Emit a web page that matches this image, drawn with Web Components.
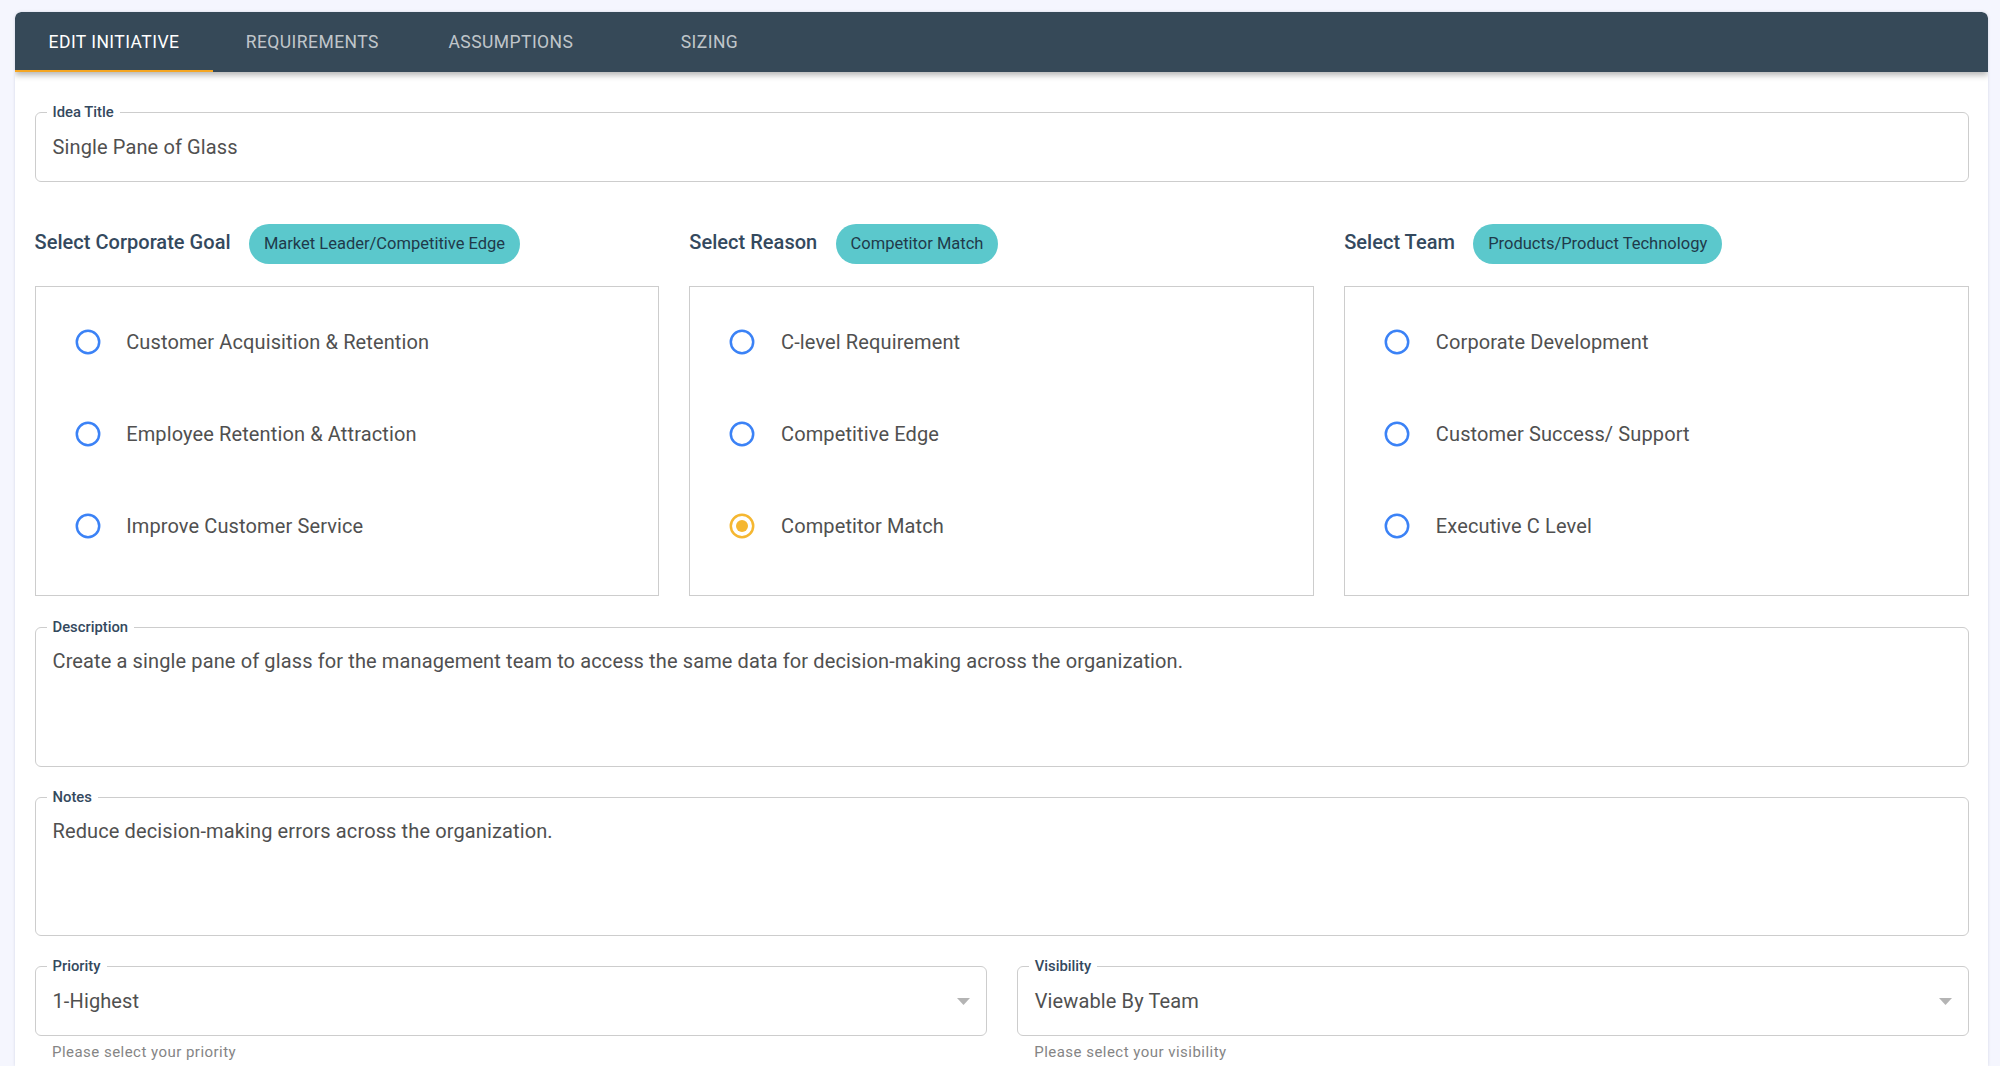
<!DOCTYPE html>
<html>
<head>
<meta charset="utf-8">
<title>Edit Initiative</title>
<style>
    html, body { margin: 0; height: 100%; overflow: hidden; background: #f5f6fe; }
    body { font-family: Roboto, "Liberation Sans", sans-serif; color: #505050; }
</style>
</head>
<body>

<initiative-page>
    <tab-bar slot="tabs" active="0" tabs="Edit Initiative,Requirements,Assumptions,Sizing"></tab-bar>

    <outlined-field label="Idea Title" height="78" style="margin-top: 32px; --field-top: 14px">Single Pane of Glass</outlined-field>

    <div slot="choices">
        <choice-group heading="Select Corporate Goal" chip="Market Leader/Competitive Edge"
            options="Customer Acquisition &amp; Retention|Employee Retention &amp; Attraction|Improve Customer Service"></choice-group>
        <choice-group heading="Select Reason" chip="Competitor Match" selected="2"
            options="C-level Requirement|Competitive Edge|Competitor Match"></choice-group>
        <choice-group heading="Select Team" chip="Products/Product Technology"
            options="Corporate Development|Customer Success/ Support|Executive C Level"></choice-group>
    </div>

    <outlined-field slot="after" label="Description" height="148">Create a single pane of glass for the management team to access the same data for decision-making across the organization.</outlined-field>
    <outlined-field slot="after" label="Notes" height="147" style="margin-top: 22px">Reduce decision-making errors across the organization.</outlined-field>

    <div slot="selects">
        <select-field label="Priority" value="1-Highest" help="Please select your priority"></select-field>
        <select-field label="Visibility" value="Viewable By Team" help="Please select your visibility"></select-field>
    </div>
</initiative-page>

<script>
const fontStack = 'Roboto, "Liberation Sans", sans-serif'

const pageTemplate = document.createElement("template");
pageTemplate.innerHTML = /*html*/`
<style>
    :host {
        display: block;
        height: 1054px;
        margin: 12px 12px 0 15px;
        background: #fff;
        border-radius: 6px 6px 0 0;
        box-shadow: 0 0 3px rgba(60, 70, 110, 0.18);
        font-family: ${fontStack};
        overflow: hidden;
    }
    #content {
        display: flex;
        flex-direction: column;
        padding: 0 19px 0 19.5px;
    }
    ::slotted([slot="choices"]) {
        display: grid;
        grid-template-columns: repeat(3, 1fr);
        column-gap: 30px;
        margin: 41px 0 23px;
    }
    ::slotted([slot="after"]) {
        display: block;
    }
    ::slotted([slot="selects"]) {
        display: grid;
        grid-template-columns: repeat(2, 1fr);
        column-gap: 30px;
        margin-top: 22px;
    }
</style>
<slot name="tabs"></slot>
<div id="content">
    <slot></slot>
    <slot name="choices"></slot>
    <slot name="after"></slot>
    <slot name="selects"></slot>
</div>
`;

class InitiativePage extends HTMLElement {
    constructor() {
        super();
        this.attachShadow({ mode: "open" });
        this.shadowRoot.appendChild(pageTemplate.content.cloneNode(true));
    }
}
customElements.define("initiative-page", InitiativePage);


const tabBarTemplate = document.createElement("template");
tabBarTemplate.innerHTML = /*html*/`
<style>
    :host {
        display: block;
        position: relative;
        background: #364958;
        border-radius: 6px 6px 0 0;
        box-shadow: 0 3px 6px rgba(0, 0, 0, 0.3);
    }
    #tabs {
        display: grid;
        grid-template-columns: 198px repeat(3, 198.6px);
        height: 60px;
    }
    .tab {
        display: flex;
        align-items: center;
        justify-content: center;
        box-sizing: border-box;
        padding-top: 1px;
        border-bottom: 2px solid transparent;
        color: rgba(255, 255, 255, 0.7);
        font-size: 17.5px;
        font-weight: 400;
        letter-spacing: 0.45px;
        text-transform: uppercase;
    }
    .tab.active {
        color: #fff;
        border-bottom-color: #f5a623;
    }
</style>
<div id="tabs"></div>
`;

class TabBar extends HTMLElement {
    constructor() {
        super();
        this.attachShadow({ mode: "open" });
        this.shadowRoot.appendChild(tabBarTemplate.content.cloneNode(true));
    }

    connectedCallback() {
        const active = parseInt(this.getAttribute("active"))
        const tabs = this.shadowRoot.querySelector("#tabs")
        this.getAttribute("tabs").split(",").forEach((name, i) => {
            const tab = document.createElement("div")
            tab.className = i == active ? "tab active" : "tab"
            tab.textContent = name
            tabs.appendChild(tab)
        })
    }
}
customElements.define("tab-bar", TabBar);


const outlinedFieldTemplate = document.createElement("template");
outlinedFieldTemplate.innerHTML = /*html*/`
<style>
    :host {
        display: block;
        color: #505050;
    }
    fieldset {
        box-sizing: border-box;
        margin: 0;
        padding: var(--field-top, 13px) 17px 0;
        border: 1.5px solid #cdcdcd;
        border-radius: 6px;
        min-width: 0;
        display: flex;
        align-items: flex-start;
    }
    legend {
        margin-left: -6px;
        padding: 0 6px;
        color: #34495e;
        font-size: 14.8px;
        font-weight: 500;
        line-height: 16px;
    }
    #value {
        flex: 1;
        font-size: 20px;
        line-height: 26px;
        letter-spacing: 0.12px;
    }
</style>
<fieldset>
    <legend></legend>
    <div id="value"><slot></slot></div>
    <slot name="end"></slot>
</fieldset>
`;

class OutlinedField extends HTMLElement {
    static get observedAttributes() { return ["label", "height"] }

    constructor() {
        super();
        this.attachShadow({ mode: "open" });
        this.shadowRoot.appendChild(outlinedFieldTemplate.content.cloneNode(true));
    }

    attributeChangedCallback(name, oldValue, value) {
        if (name == "label") this.shadowRoot.querySelector("legend").textContent = value
        if (name == "height") this.shadowRoot.querySelector("fieldset").style.height = value + "px"
    }
}
customElements.define("outlined-field", OutlinedField);


const selectFieldTemplate = document.createElement("template");
selectFieldTemplate.innerHTML = /*html*/`
<style>
    :host { display: block; --field-top: 14px; }
    svg { display: block; margin: 10px -1px 0 0; }
    #help {
        margin: 7px 0 0 17.5px;
        color: #858585;
        font-size: 15px;
        line-height: 18px;
        letter-spacing: 0.47px;
    }
</style>
<outlined-field height="78">
    <span id="selected"></span>
    <svg slot="end" width="13" height="7" viewBox="0 0 13 7"><path d="M0 0h13L6.5 7z" fill="#b4b4b4"/></svg>
</outlined-field>
<div id="help"></div>
`;

class SelectField extends HTMLElement {
    constructor() {
        super();
        this.attachShadow({ mode: "open" });
        this.shadowRoot.appendChild(selectFieldTemplate.content.cloneNode(true));
    }

    connectedCallback() {
        this.shadowRoot.querySelector("outlined-field").setAttribute("label", this.getAttribute("label"))
        this.shadowRoot.querySelector("#selected").textContent = this.getAttribute("value")
        this.shadowRoot.querySelector("#help").textContent = this.getAttribute("help")
    }
}
customElements.define("select-field", SelectField);


const radioOptionTemplate = document.createElement("template");
radioOptionTemplate.innerHTML = /*html*/`
<style>
    :host {
        display: flex;
        align-items: center;
        gap: 25.7px;
        height: 92px;
        color: #505050;
        font-size: 20px;
        letter-spacing: 0.12px;
    }
    svg { display: block; flex: none; }
    circle.ring { fill: none; stroke: #3b82f6; stroke-width: 2.5; }
    circle.dot { display: none; fill: #f5b731; }
    :host([selected]) circle.ring { stroke: #f5b731; }
    :host([selected]) circle.dot { display: block; }
</style>
<svg width="26" height="26" viewBox="0 0 26 26">
    <circle class="ring" cx="13" cy="13" r="11.2"/>
    <circle class="dot" cx="13" cy="13" r="6"/>
</svg>
<span><slot></slot></span>
`;

class RadioOption extends HTMLElement {
    constructor() {
        super();
        this.attachShadow({ mode: "open" });
        this.shadowRoot.appendChild(radioOptionTemplate.content.cloneNode(true));
    }
}
customElements.define("radio-option", RadioOption);


const choiceGroupTemplate = document.createElement("template");
choiceGroupTemplate.innerHTML = /*html*/`
<style>
    :host {
        display: block;
        min-width: 0;
    }
    #head {
        display: flex;
        align-items: center;
        gap: 18.3px;
        height: 41px;
        margin-bottom: 22px;
    }
    h3 {
        margin: 0;
        color: #34495e;
        font-size: 20px;
        font-weight: 500;
        line-height: 26px;
        letter-spacing: 0.03px;
        padding-bottom: 3px;
    }
    #chip {
        display: flex;
        align-items: center;
        height: 40px;
        padding: 0 15px;
        border-radius: 20px;
        background: #5bc8cc;
        color: #1f3a4a;
        font-size: 16.5px;
        font-weight: 400;
    }
    #options {
        box-sizing: border-box;
        height: 310px;
        padding: 9px 0 0 39px;
        border: 1.5px solid #cdcdcd;
    }
</style>
<div id="head">
    <h3></h3>
    <span id="chip"></span>
</div>
<div id="options"></div>
`;

class ChoiceGroup extends HTMLElement {
    constructor() {
        super();
        this.attachShadow({ mode: "open" });
        this.shadowRoot.appendChild(choiceGroupTemplate.content.cloneNode(true));
    }

    connectedCallback() {
        this.shadowRoot.querySelector("h3").textContent = this.getAttribute("heading")
        this.shadowRoot.querySelector("#chip").textContent = this.getAttribute("chip")
        const selected = this.getAttribute("selected")
        const options = this.shadowRoot.querySelector("#options")
        this.getAttribute("options").split("|").forEach((text, i) => {
            const option = document.createElement("radio-option")
            option.textContent = text
            if (selected != null && parseInt(selected) == i) option.setAttribute("selected", "")
            options.appendChild(option)
        })
    }
}
customElements.define("choice-group", ChoiceGroup);
</script>
</body>
</html>
